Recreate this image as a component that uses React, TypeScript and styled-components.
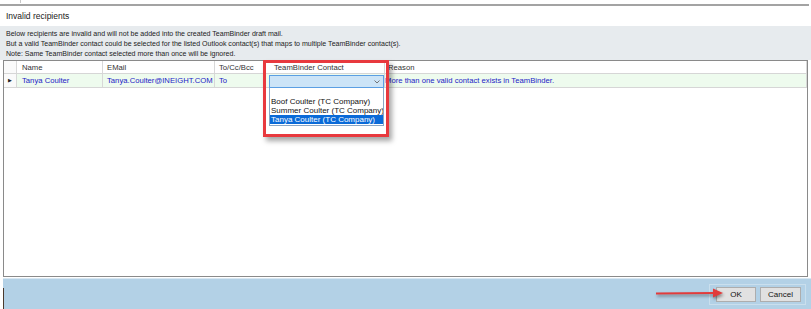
import React from "react";
import styled, { createGlobalStyle } from "styled-components";

const GlobalStyle = createGlobalStyle`
  html, body {
    margin: 0;
    padding: 0;
    background: #fff;
    font-family: "Liberation Sans", Arial, sans-serif;
  }
  #root {
    width: 811px;
    height: 309px;
    overflow: hidden;
  }
`;

const Window = styled.div`
  display: flex;
  flex-direction: column;
  height: 309px;
`;

const TopStrip = styled.div`
  height: 4px;
  margin-right: 2px;
  padding-left: 20px;
  border-bottom: 2px solid #a3a3a3;
  display: flex;
`;

const Tick = styled.span`
  width: 1px;
  height: 3px;
  background: #c8c8c8;
`;

const TitleBar = styled.div`
  height: 20px;
  padding-left: 6px;
  display: flex;
  align-items: center;
  font-size: 8.5px;
  color: #222;
`;

const InfoPanel = styled.div`
  box-sizing: border-box;
  height: 34px;
  padding: 3px 6px 0;
  background: #e7ebee;
  font-size: 7.05px;
  line-height: 10px;
  color: #222;
`;

const Grid = styled.div`
  position: relative;
  box-sizing: border-box;
  height: 217px;
  margin: 0 3px 1px 3px;
  border: 1px solid #8a8a8a;
  background: #fff;
`;

const Row = styled.div<{ $head?: boolean }>`
  display: grid;
  grid-template-columns: 13px 86px 112px 51px 119px 1fr;
  box-sizing: border-box;
  height: ${(p) => (p.$head ? "13px" : "14px")};
  border-bottom: 1px solid #d6d6d6;
  background: ${(p) => (p.$head ? "#fff" : "#eefbee")};
  color: ${(p) => (p.$head ? "#333" : "#2323c6")};
  font-size: 7.7px;
`;

const Cell = styled.div<{ $pad?: number }>`
  display: flex;
  align-items: center;
  padding-left: ${(p) => p.$pad ?? 4}px;
  border-right: 1px solid #d8d8d8;
  white-space: nowrap;
  overflow: hidden;
`;

const RowHeader = styled(Cell)`
  background: #fafafa;
  justify-content: center;
  padding-left: 0;
  font-size: 4.5px;
  color: #222;
`;

const ComboCell = styled(Cell)`
  padding-left: 3px;
  align-items: flex-end;
  overflow: visible;
`;

const Combo = styled.div`
  box-sizing: border-box;
  width: 115px;
  height: 13px;
  margin-bottom: -1px;
  background: #cce4f7;
  border: 1px solid #5b9fe3;
  display: flex;
  justify-content: flex-end;
  align-items: center;
  padding-right: 3px;
`;

const ListBox = styled.div`
  position: absolute;
  left: 265px;
  top: 27px;
  width: 115px;
  box-sizing: border-box;
  padding: 9px 0 1px;
  background: #fff;
  border: 1px solid #8aa5c4;
  border-top: none;
  font-size: 8px;
  line-height: 9px;
  color: #111;
  overflow: hidden;
`;

const Option = styled.div<{ $selected?: boolean }>`
  padding-left: 1px;
  white-space: nowrap;
  background: ${(p) => (p.$selected ? "#0a6ad8" : "transparent")};
  color: ${(p) => (p.$selected ? "#fff" : "#111")};
`;

const Highlight = styled.div`
  position: absolute;
  left: 259px;
  top: -1px;
  width: 126px;
  height: 77px;
  box-sizing: border-box;
  border: 3px solid #e8393e;
  box-shadow: 3px 4px 5px rgba(0, 0, 0, 0.35);
  pointer-events: none;
`;

const Footer = styled.div`
  position: relative;
  box-sizing: border-box;
  height: 31px;
  margin-left: 3px;
  border-top: 1px solid #d8e7f2;
  background: #b3d1e6;
  display: flex;
  justify-content: flex-end;
  align-items: center;
  padding-right: 5px;

  &::before {
    content: "";
    position: absolute;
    left: 0;
    top: 9px;
    bottom: 0;
    width: 1px;
    background: #4b3a2e;
  }
`;

const ButtonFrame = styled.div`
  display: flex;
  gap: 4px;
  padding: 2px 4px 2px 6px;
  border: 1px solid rgba(255, 255, 255, 0.3);
`;

const Button = styled.button<{ $w: number }>`
  box-sizing: border-box;
  width: ${(p) => p.$w}px;
  height: 15px;
  padding: 0;
  background: #e1e1e1;
  border: 1px solid #adadad;
  font-family: "Liberation Sans", Arial, sans-serif;
  font-size: 8px;
  color: #111;
`;

const Arrow = styled.svg`
  position: absolute;
  left: 650px;
  top: 7px;
  overflow: visible;
  filter: drop-shadow(1px 2px 1.5px rgba(0, 0, 0, 0.4));
`;

const App: React.FC = () => {
  return (
    <>
      <GlobalStyle />
      <Window>
        <TopStrip>
          <Tick />
        </TopStrip>
        <TitleBar>Invalid recipients</TitleBar>
        <InfoPanel>
          <div>Below recipients are invalid and will not be added into the created TeamBinder draft mail.</div>
          <div>
            But a valid TeamBinder contact could be selected for the listed Outlook contact(s) that maps to
            multiple TeamBinder contact(s).
          </div>
          <div>Note: Same TeamBinder contact selected more than once will be ignored.</div>
        </InfoPanel>
        <Grid>
          <Row $head>
            <RowHeader />
            <Cell $pad={5}>Name</Cell>
            <Cell>EMail</Cell>
            <Cell>To/Cc/Bcc</Cell>
            <Cell $pad={8}>TeamBinder Contact</Cell>
            <Cell $pad={3}>Reason</Cell>
          </Row>
          <Row>
            <RowHeader>▶</RowHeader>
            <Cell $pad={5}>Tanya Coulter</Cell>
            <Cell>Tanya.Coulter@INEIGHT.COM</Cell>
            <Cell>To</Cell>
            <ComboCell>
              <Combo>
                <svg width="6" height="4" viewBox="0 0 6 4">
                  <polyline points="0.5,0.5 3,3 5.5,0.5" fill="none" stroke="#666" strokeWidth="0.9" />
                </svg>
              </Combo>
            </ComboCell>
            <Cell $pad={0}>More than one valid contact exists in TeamBinder.</Cell>
          </Row>
          <ListBox>
            <Option>Boof Coulter (TC Company)</Option>
            <Option>Summer Coulter (TC Company)</Option>
            <Option $selected>Tanya Coulter (TC Company)</Option>
          </ListBox>
          <Highlight />
        </Grid>
        <Footer>
          <Arrow width="72" height="14" viewBox="0 0 72 14">
            <line x1="3" y1="7.5" x2="62" y2="7" stroke="#e23b3b" strokeWidth="2.2" />
            <polygon points="60,2.5 70,7 60,11.5" fill="#e23b3b" />
          </Arrow>
          <ButtonFrame>
            <Button $w={40}>OK</Button>
            <Button $w={41}>Cancel</Button>
          </ButtonFrame>
        </Footer>
      </Window>
    </>
  );
};

export default App;
